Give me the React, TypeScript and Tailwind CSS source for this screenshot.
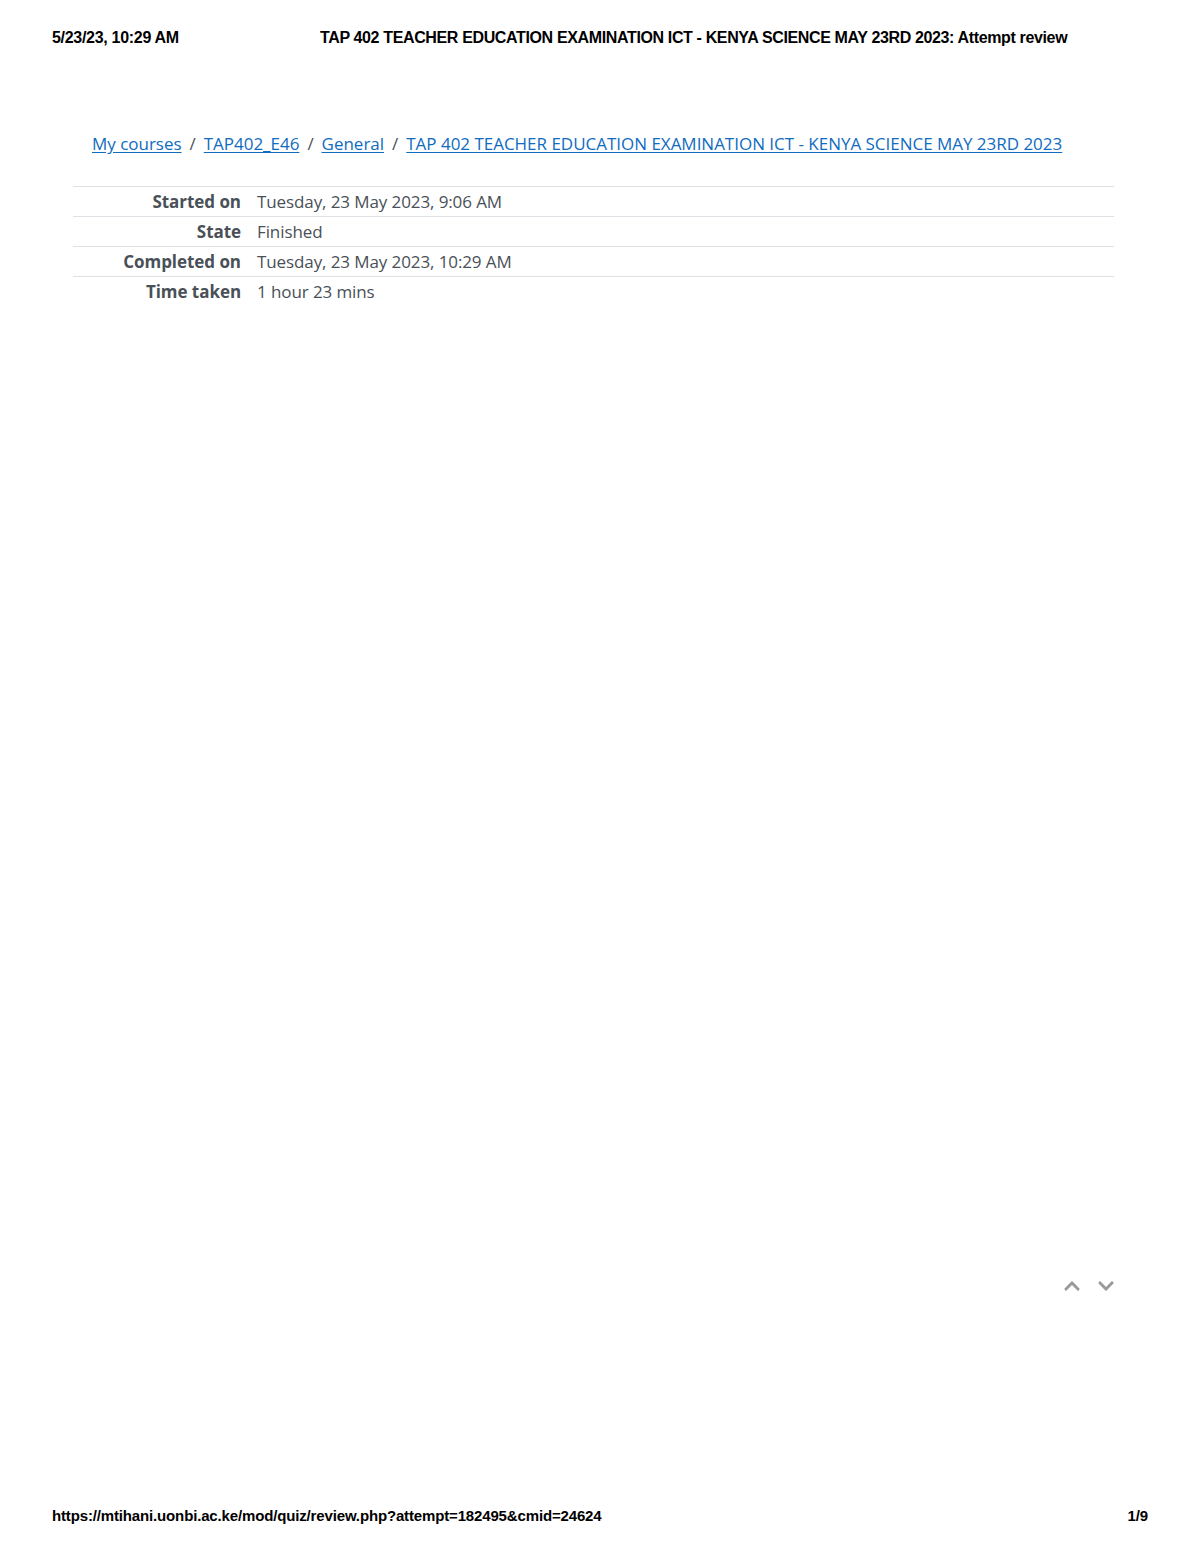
import { FaChevronUp, FaChevronDown } from 'react-icons/fa'

const rows = [
  { label: 'Started on', value: 'Tuesday, 23 May 2023, 9:06 AM' },
  { label: 'State', value: 'Finished' },
  { label: 'Completed on', value: 'Tuesday, 23 May 2023, 10:29 AM' },
  { label: 'Time taken', value: '1 hour 23 mins' },
]

const crumbs = ['My courses', 'TAP402_E46', 'General', 'TAP 402 TEACHER EDUCATION EXAMINATION ICT - KENYA SCIENCE MAY 23RD 2023']

export default function App() {
  return (
    <div className="w-[1200px] h-[1553px] bg-white flex flex-col text-[#1d2125]">
      {/* print header */}
      <div className="flex items-center h-[20px] mt-[28px] px-[52px] font-['Liberation_Sans',Arial,sans-serif] font-bold text-[16px] tracking-[-0.3px] text-black">
        <span className="w-[268px]">5/23/23, 10:29 AM</span>
        <span className="tracking-[-0.36px]">TAP 402 TEACHER EDUCATION EXAMINATION ICT - KENYA SCIENCE MAY 23RD 2023: Attempt review</span>
      </div>

      <div className="flex flex-col px-[73px] mt-[84px] font-['Open_Sans','Noto_Sans',sans-serif]">
        <nav className="flex items-center pl-[19px] text-[17px] tracking-[-0.02px] h-[24px]">
          {crumbs.map((c, i) => (
            <span key={c} className="flex items-center">
              {i > 0 && <span className="mx-[8px] text-[#495057]">/</span>}
              <a className="text-[#0f6cbf] underline underline-offset-2">{c}</a>
            </span>
          ))}
        </nav>

        <table className="mt-[30px] w-[1041px] text-[17px] tracking-[-0.1px] border-collapse">
          <tbody>
            {rows.map((r, i) => (
              <tr key={r.label} className={i < 3 ? 'border-t border-b border-[#dee2e6]' : 'border-t border-[#dee2e6]'}>
                <th className="w-[184px] pr-[16px] text-right font-bold text-[#495057] h-[30px] align-middle tracking-[-0.05px]">{r.label}</th>
                <td className="text-[#495057] h-[30px] align-middle">{r.value}</td>
              </tr>
            ))}
          </tbody>
        </table>
      </div>

      <div className="flex-1" />

      <div className="flex justify-end items-center gap-[16px] pr-[85px] mb-[211px] text-[#999999]">
        <FaChevronUp size={18} />
        <FaChevronDown size={18} />
      </div>

      <div className="flex items-center justify-between h-[20px] mb-[27px] px-[52px] font-['Liberation_Sans',Arial,sans-serif] font-bold text-[15px] tracking-[-0.15px] text-black">
        <span>https://mtihani.uonbi.ac.ke/mod/quiz/review.php?attempt=182495&amp;cmid=24624</span>
        <span>1/9</span>
      </div>
    </div>
  )
}
